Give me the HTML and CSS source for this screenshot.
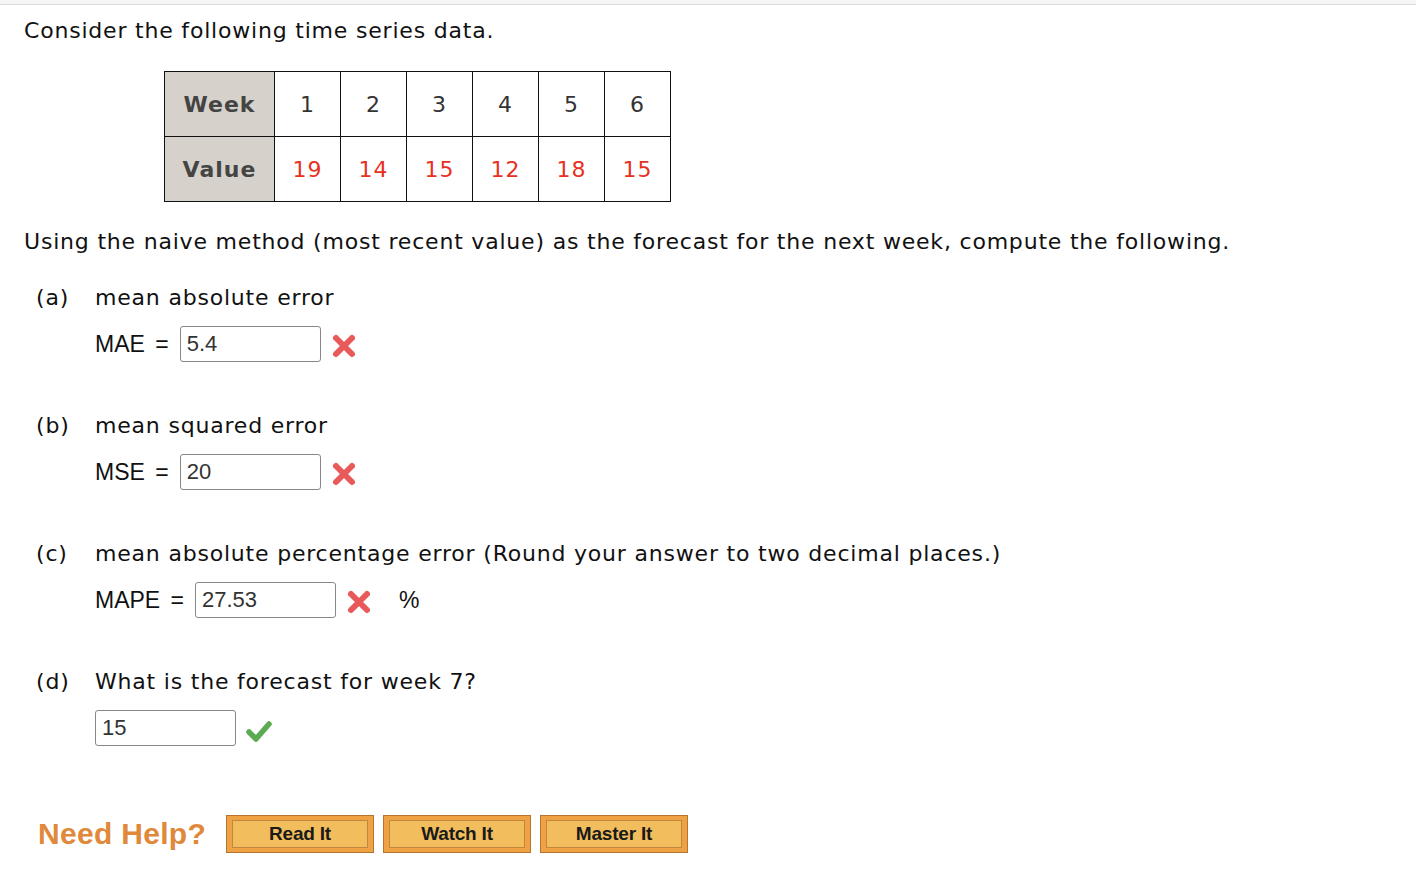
FILE: index.html
```html
<!DOCTYPE html>
<html>
<head>
<meta charset="utf-8">
<link rel="stylesheet" href="styles.css">
</head>
<body>
<div class="topbar"></div>
<div class="content">
  <p class="intro">Consider the following time series data.</p>
  <table class="data">
    <tr><th>Week</th><td>1</td><td>2</td><td>3</td><td>4</td><td>5</td><td>6</td></tr>
    <tr><th>Value</th><td class="val">19</td><td class="val">14</td><td class="val">15</td><td class="val">12</td><td class="val">18</td><td class="val">15</td></tr>
  </table>
  <p class="prompt">Using the naive method (most recent value) as the forecast for the next week, compute the following.</p>

  <div class="part">
    <div class="q"><span class="lbl">(a)</span><span>mean absolute error</span></div>
    <div class="ans"><span class="math">MAE =</span><span class="box">5.4</span><svg class="mark" viewBox="0 0 26 26"><path d="M5 5 L21 21 M21 5 L5 21" stroke="#e85a5a" stroke-width="6" stroke-linecap="round"/></svg></div>
  </div>

  <div class="part">
    <div class="q"><span class="lbl">(b)</span><span>mean squared error</span></div>
    <div class="ans"><span class="math">MSE =</span><span class="box">20</span><svg class="mark" viewBox="0 0 26 26"><path d="M5 5 L21 21 M21 5 L5 21" stroke="#e85a5a" stroke-width="6" stroke-linecap="round"/></svg></div>
  </div>

  <div class="part">
    <div class="q"><span class="lbl">(c)</span><span>mean absolute percentage error (Round your answer to two decimal places.)</span></div>
    <div class="ans"><span class="math">MAPE =</span><span class="box">27.53</span><svg class="mark" viewBox="0 0 26 26"><path d="M5 5 L21 21 M21 5 L5 21" stroke="#e85a5a" stroke-width="6" stroke-linecap="round"/></svg><span class="math pct">%</span></div>
  </div>

  <div class="part">
    <div class="q"><span class="lbl">(d)</span><span>What is the forecast for week 7?</span></div>
    <div class="ans"><span class="box">15</span><svg class="mark check" viewBox="0 0 28 26"><path d="M4 14 L11 21 L24 6" fill="none" stroke="#5cab52" stroke-width="5.5" stroke-linecap="round" stroke-linejoin="round"/></svg></div>
  </div>

  <div class="help">
    <span class="needhelp">Need Help?</span>
    <span class="btn"><span class="btn-in">Read It</span></span>
    <span class="btn"><span class="btn-in">Watch It</span></span>
    <span class="btn"><span class="btn-in">Master It</span></span>
  </div>
</div>
</body>
</html>
```
FILE: styles.css
```css
html, body {
  margin: 0;
  padding: 0;
  background: #fff;
}
body {
  font-family: "DejaVu Sans", Verdana, sans-serif;
  color: #111;
}
.topbar {
  height: 4px;
  background: #f5f5f5;
  border-bottom: 1px solid #dcdcdc;
}
.content {
  padding: 0 24px;
}
.intro, .prompt {
  margin: 0;
  font-size: 22px;
  line-height: 24px;
  letter-spacing: 0.8px;
}
.intro {
  padding-top: 14px;
}
table.data {
  margin: 28px 0 0 140px;
  border-collapse: collapse;
}
table.data th, table.data td {
  border: 1px solid #111;
  height: 64px;
  padding: 0;
  text-align: center;
  font-size: 22px;
  letter-spacing: 1px;
  color: #333;
}
table.data th {
  width: 109px;
  background: #d6d2cb;
  color: #444;
  font-weight: bold;
}
table.data td {
  width: 65px;
}
table.data td.val {
  color: #e8311f;
}
.prompt {
  margin-top: 28px;
}
.part {
  margin-top: 32px;
}
.part + .part {
  margin-top: 52px;
}
.q {
  display: flex;
  font-size: 22px;
  line-height: 24px;
  letter-spacing: 0.8px;
}
.lbl {
  width: 59px;
  padding-left: 12px;
}
.ans {
  display: flex;
  align-items: center;
  margin-top: 16px;
  padding-left: 71px;
  height: 36px;
}
.math {
  font-family: "Liberation Sans", Arial, sans-serif;
  font-size: 23px;
  color: #111;
  margin-right: 11px;
  word-spacing: 4px;
}
.pct {
  margin-left: 27px;
}
.box {
  box-sizing: border-box;
  width: 141px;
  height: 36px;
  border: 1px solid #888;
  border-radius: 3px;
  font-family: "Liberation Sans", Arial, sans-serif;
  font-size: 22px;
  color: #333;
  padding: 4px 0 0 6px;
  line-height: 26px;
}
.mark {
  width: 26px;
  height: 26px;
  margin-left: 10px;
  margin-top: 4px;
}
.mark.check {
  width: 28px;
  margin-left: 9px;
  margin-top: 6px;
}
.help {
  display: flex;
  align-items: center;
  margin-top: 69px;
  padding-left: 14px;
  gap: 9px;
}
.needhelp {
  font-family: "Liberation Sans", Arial, sans-serif;
  font-weight: bold;
  font-size: 30px;
  letter-spacing: 0.3px;
  color: #e0893a;
  margin-right: 11px;
}
.btn {
  box-sizing: border-box;
  width: 148px;
  height: 38px;
  border: 1px solid #b5772f;
  background: #eea244;
  padding: 4px 5px;
  display: flex;
}
.btn-in {
  flex: 1;
  border: 1px solid #c4863e;
  background: #f2bd5c;
  display: flex;
  align-items: center;
  justify-content: center;
  font-family: "Liberation Sans", Arial, sans-serif;
  font-weight: bold;
  font-size: 19px;
  color: #1a1a1a;
  letter-spacing: -0.2px;
}
```
